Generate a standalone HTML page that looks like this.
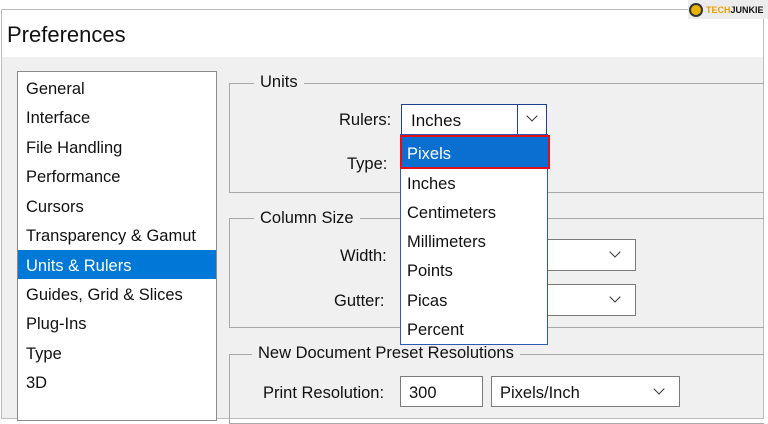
<!DOCTYPE html>
<html><head><style>
*{margin:0;padding:0;box-sizing:border-box}
body{width:768px;height:413px;overflow:hidden;background:#fff;font-family:"Liberation Sans",sans-serif;color:#111;position:relative;font-size:16.5px}
.a{position:absolute}
.t{line-height:20px;margin-top:2px}
.win{left:1px;top:9px;width:763px;height:410px;border:1px solid #bcbcbc;background:#f0f0f0}
.title{left:2px;top:10px;width:761px;height:47px;background:#fff}
.list{left:17px;top:71px;width:200px;height:350px;background:#fff;border:1px solid #8a8a8a}
.list div{position:absolute;left:8px;line-height:20px;margin-top:1px}
.grp{border:1px solid #a8a8a8;border-right:none}
.lbl{background:#f0f0f0;padding:0 6px;line-height:20px}
.box{background:#fff;border:1px solid #7a7a7a}
.chev{position:absolute;width:8px;height:8px;border-right:1.5px solid #333;border-bottom:1.5px solid #333;transform:rotate(45deg)}
</style></head><body>
<div class="a win"></div>
<div class="a title"></div>
<div class="a" style="left:7px;top:22px;font-size:22px;line-height:26px">Preferences</div>
<div class="a" style="left:688px;top:0;width:80px;height:19px;background:#ececec"></div>
<div class="a" style="left:689px;top:3px;width:14px;height:14px;border-radius:50%;background:#e8b400;border:2px solid #333"></div>
<div class="a" style="left:706px;top:5px;font-size:9px;font-weight:bold;line-height:10px"><span style="color:#e8a000">TECH</span>JUNKIE</div>

<div class="a list">
<div style="top:6px">General</div>
<div style="top:35px">Interface</div>
<div style="top:65px">File Handling</div>
<div style="top:94px">Performance</div>
<div style="top:124px">Cursors</div>
<div style="top:153px">Transparency &amp; Gamut</div>
<div style="left:0;top:178px;width:198px;height:29px;background:#0078d7;margin:0"></div>
<div style="top:183px;color:#fff">Units &amp; Rulers</div>
<div style="top:212px">Guides, Grid &amp; Slices</div>
<div style="top:241px">Plug-Ins</div>
<div style="top:271px">Type</div>
<div style="top:300px">3D</div>
</div>

<div class="a grp" style="left:229px;top:83px;width:535px;height:110px"></div>
<div class="a lbl" style="left:254px;top:72px">Units</div>
<div class="a t" style="left:339px;top:108px">Rulers:</div>
<div class="a t" style="left:347px;top:152px">Type:</div>
<div class="a box" style="left:401px;top:104px;width:146px;height:31px;border-color:#1f3f8f"></div>
<div class="a t" style="left:411px;top:109px;font-size:17px">Inches</div>
<div class="a" style="left:517px;top:105px;width:29px;height:29px;border-left:1px solid #1f3f8f;background:#fff"></div>
<div class="chev" style="left:528px;top:112px"></div>

<div class="a grp" style="left:229px;top:218px;width:535px;height:110px"></div>
<div class="a lbl" style="left:254px;top:208px">Column Size</div>
<div class="a t" style="left:340px;top:244px">Width:</div>
<div class="a t" style="left:334px;top:289px">Gutter:</div>
<div class="a box" style="left:545px;top:239px;width:91px;height:32px"></div>
<div class="chev" style="left:611px;top:248px"></div>
<div class="a box" style="left:545px;top:284px;width:91px;height:32px"></div>
<div class="chev" style="left:611px;top:293px"></div>

<div class="a grp" style="left:229px;top:354px;width:535px;height:70px"></div>
<div class="a lbl" style="left:252px;top:343px">New Document Preset Resolutions</div>
<div class="a t" style="left:263px;top:381px">Print Resolution:</div>
<div class="a box" style="left:400px;top:376px;width:83px;height:31px"></div>
<div class="a t" style="left:409px;top:381px">300</div>
<div class="a box" style="left:491px;top:376px;width:189px;height:31px"></div>
<div class="a t" style="left:500px;top:381px">Pixels/Inch</div>
<div class="chev" style="left:655px;top:385px"></div>

<div class="a" style="left:400px;top:134px;width:148px;height:211px;background:#fff;border:1.5px solid #2a5bb0"></div>
<div class="a" style="left:400px;top:135px;width:150px;height:34px;background:#0a6fd0;border:2.5px solid #e0101a"></div>
<div class="a t" style="left:407px;top:142px;color:#fff">Pixels</div>
<div class="a t" style="left:407px;top:172px">Inches</div>
<div class="a t" style="left:407px;top:201px">Centimeters</div>
<div class="a t" style="left:407px;top:230px">Millimeters</div>
<div class="a t" style="left:407px;top:259px">Points</div>
<div class="a t" style="left:407px;top:289px">Picas</div>
<div class="a t" style="left:407px;top:318px">Percent</div>
</body></html>
